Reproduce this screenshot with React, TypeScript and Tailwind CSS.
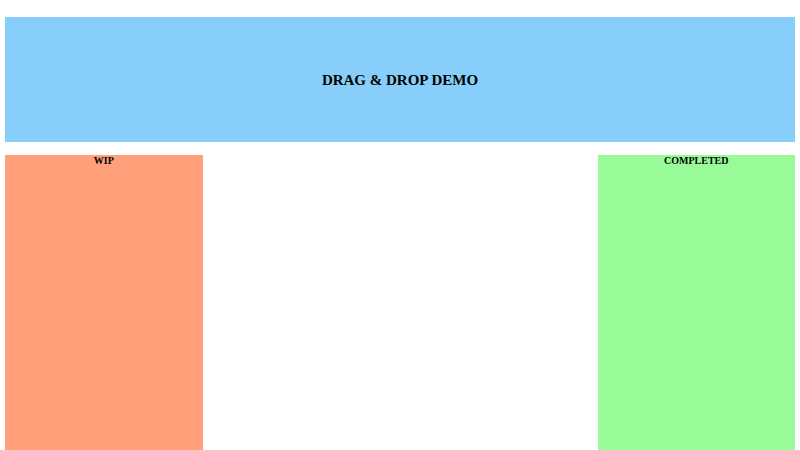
import React from 'react';

const columns = [
  { id: 'wip', title: 'WIP', bg: 'bg-[#ffa07a]' },
  { id: 'completed', title: 'COMPLETED', bg: 'bg-[#98fb98]' },
];

export default function App() {
  return (
    <div className="w-[800px] h-[450px] overflow-hidden bg-white px-[5px] pt-[17px] font-['Liberation_Serif',serif] text-black">
      <header className="h-[125px] bg-[#87cefa] flex items-center justify-center">
        <h1 className="text-[15px] font-bold leading-none mt-[1px]">DRAG &amp; DROP DEMO</h1>
      </header>

      <div className="mt-[13px] flex justify-between">
        {columns.map((col) => (
          <div key={col.id} className={`w-[197.5px] h-[300px] ${col.bg}`}>
            <h2 className="text-center text-[10px] font-bold leading-[10px] pt-[1px]">{col.title}</h2>
          </div>
        ))}
      </div>
    </div>
  );
}
